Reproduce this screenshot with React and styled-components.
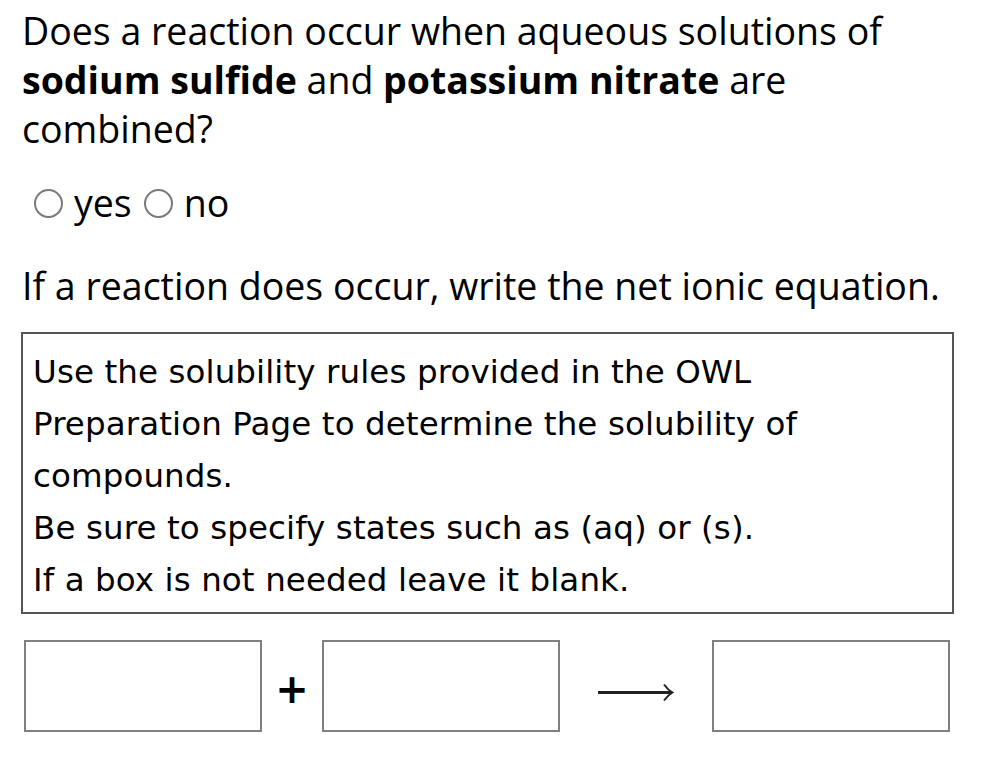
import React from 'react';
import styled, { createGlobalStyle } from 'styled-components';

const GlobalStyle = createGlobalStyle`
  html, body {
    margin: 0;
    padding: 0;
    background: #ffffff;
  }
  body {
    font-family: "Open Sans", "Liberation Sans", sans-serif;
    color: #000000;
  }
`;

const Page = styled.div`
  padding: 6px 29px 0 21px;
  width: 933px;
`;

const Question = styled.p`
  margin: 0 0 0 1px;
  font-size: 37.5px;
  line-height: 49px;
`;

const Choices = styled.div`
  display: flex;
  align-items: center;
  margin: 30px 0 0 13px;
  font-size: 37.5px;
  line-height: 40px;
`;

const Choice = styled.label`
  display: flex;
  align-items: center;
  margin-right: 12px;
`;

const Radio = styled.span`
  box-sizing: border-box;
  width: 29px;
  height: 29px;
  border: 2px solid #7a7a7a;
  border-radius: 50%;
  margin-right: 11px;
  margin-top: 1px;
`;

const Prompt = styled.p`
  margin: 38px 0 0 1px;
  font-size: 37.5px;
  line-height: 50px;
`;

const Hint = styled.div`
  margin-top: 21px;
  border: 2px solid #555555;
  padding: 12px 12px 6px 10px;
  font-family: "DejaVu Sans", Verdana, sans-serif;
  font-size: 32.5px;
  line-height: 52px;
  letter-spacing: 0.1px;
`;

const Equation = styled.div`
  display: flex;
  align-items: center;
  margin-top: 26px;
  margin-left: 3px;
`;

const AnswerBox = styled.div`
  box-sizing: border-box;
  width: 238px;
  height: 92px;
  border: 2px solid #808080;
`;

const Plus = styled.span`
  width: 60px;
  text-align: center;
  font-family: "DejaVu Sans", Verdana, sans-serif;
  font-weight: bold;
  font-size: 40px;
  line-height: 40px;
  padding-top: 6px;
`;

const ArrowWrap = styled.span`
  width: 152px;
  display: flex;
  justify-content: center;
  padding-top: 12px;
`;

export default function App() {
  return (
    <>
      <GlobalStyle />
      <Page>
        <Question>
          Does a reaction occur when aqueous solutions of <b>sodium sulfide</b> and{' '}
          <b>potassium nitrate</b> are combined?
        </Question>
        <Choices>
          <Choice><Radio />yes</Choice>
          <Choice><Radio />no</Choice>
        </Choices>
        <Prompt>If a reaction does occur, write the net ionic equation.</Prompt>
        <Hint>
          Use the solubility rules provided in the OWL Preparation Page to determine the solubility of compounds.
          <br />
          Be sure to specify states such as (aq) or (s).
          <br />
          If a box is not needed leave it blank.
        </Hint>
        <Equation>
          <AnswerBox />
          <Plus>+</Plus>
          <AnswerBox />
          <ArrowWrap>
            <svg width="76" height="19" viewBox="0 0 76 19">
              <line x1="0" y1="9.5" x2="74" y2="9.5" stroke="#222" strokeWidth="3" />
              <path d="M66 1.5 Q70 7 74.5 9.5 Q70 12 66 17.5" fill="none" stroke="#222" strokeWidth="2" />
            </svg>
          </ArrowWrap>
          <AnswerBox />
        </Equation>
      </Page>
    </>
  );
}
